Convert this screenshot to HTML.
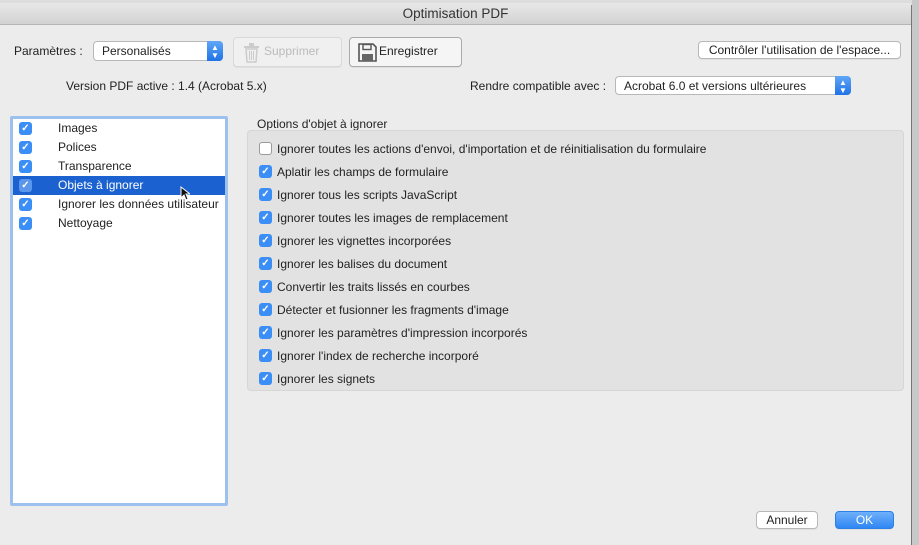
<!DOCTYPE html>
<html><head><meta charset="utf-8"><style>
*{box-sizing:border-box;margin:0;padding:0}
body{width:919px;height:545px;overflow:hidden;background:#c8c8c8;font-family:"Liberation Sans",sans-serif;font-size:12px;color:#222;position:relative}
.win{position:absolute;left:0;top:0;width:912px;height:545px;background:#ececec;border-right:1px solid #777}
.strip{position:absolute;left:0;top:0;width:912px;height:5px;background:#ddd}
.title{position:absolute;left:0;top:3px;width:911px;height:22px;background:linear-gradient(#e8e8e8,#d3d3d3);border-bottom:1px solid #b5b5b5;text-align:center;font-size:13.5px;line-height:22px;color:#333}
.a{position:absolute;white-space:nowrap}
.btn{position:absolute;background:#fff;border:1px solid #b8b8b8;border-radius:4px;text-align:center;font-size:12px;line-height:17px;box-shadow:0 1px 0 rgba(0,0,0,.05)}
.sel{position:absolute;background:#fff;border:1px solid #b8b8b8;border-radius:4px;font-size:12px;line-height:18px;padding-left:8px}
.sel .ar{position:absolute;right:-1px;top:-1px;width:16px;height:20px;background:linear-gradient(#5fa6f7,#1f73e6);border-radius:0 4px 4px 0;color:#fff;font-size:8px;line-height:8px;text-align:center;padding-top:3px}
.cb{position:absolute;width:13px;height:13px;border-radius:3px;background:#3a8ef6;color:#fff;font-size:10px;line-height:13px;text-align:center;font-weight:bold}
.cb.off{background:#fff;border:1px solid #9a9a9a}
.list{position:absolute;left:10px;top:116px;width:218px;height:390px;background:#fff;border:3px solid #9cc1ee;border-radius:2px}
.row{position:absolute;left:0;width:212px;height:19px;line-height:19px}
.row span{position:absolute;left:45px}
.row .cb{left:6px;top:3px}
.grp{position:absolute;left:247px;top:130px;width:657px;height:261px;background:#e2e2e2;border:1px solid #d6d6d6;border-radius:4px}
.opt{position:absolute;left:11px;height:16px;line-height:16px;white-space:nowrap}
.opt .cb{left:0;top:1px}
.opt span{position:absolute;left:18px}
</style></head><body>
<div class="win">
<div class="strip"></div>
<div class="title">Optimisation PDF</div>
<div class="a" style="left:14px;top:44px">Paramètres :</div>
<div class="sel" style="left:93px;top:41px;width:130px;height:20px">Personalisés<div class="ar">▲<br>▼</div></div>
<div class="btn" style="left:233px;top:37px;width:109px;height:30px;border-color:#d8d8d8;background:#f0f0f0;color:#bbb;line-height:26px;text-align:left;padding-left:30px">Supprimer
<svg style="position:absolute;left:9px;top:5px" width="17" height="20" viewBox="0 0 17 20"><rect x="1" y="3" width="15" height="2" fill="#ccc"/><rect x="6" y="0" width="5" height="3" fill="#ccc"/><path d="M3 6h11l-1 13H4z" fill="none" stroke="#ccc" stroke-width="1.5"/><path d="M6.5 8v9M8.5 8v9M10.5 8v9" stroke="#ccc"/></svg></div>
<div class="btn" style="left:349px;top:37px;width:113px;height:30px;line-height:26px;text-align:left;padding-left:29px;background:#f5f5f5;border-color:#aaa">Enregistrer
<svg style="position:absolute;left:8px;top:5px" width="19" height="19" viewBox="0 0 19 19"><path d="M1 1h14l3 3v14H1z" fill="none" stroke="#555" stroke-width="1.6"/><rect x="5" y="1.5" width="8" height="5" fill="none" stroke="#555" stroke-width="1.4"/><rect x="4" y="11" width="11" height="7" fill="#666"/></svg></div>
<div class="btn" style="left:698px;top:41px;width:203px;height:18px;line-height:16px">Contrôler l'utilisation de l'espace...</div>
<div class="a" style="left:66px;top:79px">Version PDF active : 1.4 (Acrobat 5.x)</div>
<div class="a" style="left:470px;top:79px">Rendre compatible avec :</div>
<div class="sel" style="left:615px;top:76px;width:236px;height:19px">Acrobat 6.0 et versions ultérieures<div class="ar" style="height:19px">▲<br>▼</div></div>
<div class="list">
<div class="row" style="top:0px"><div class="cb">✓</div><span>Images</span></div>
<div class="row" style="top:19px"><div class="cb">✓</div><span>Polices</span></div>
<div class="row" style="top:38px"><div class="cb">✓</div><span>Transparence</span></div>
<div class="row" style="top:57px;background:#1b62d0;color:#fff"><div class="cb" style="background:#5a96ec">✓</div><span>Objets à ignorer</span></div>
<div class="row" style="top:76px"><div class="cb">✓</div><span>Ignorer les données utilisateur</span></div>
<div class="row" style="top:95px"><div class="cb">✓</div><span>Nettoyage</span></div>
</div>
<svg style="position:absolute;left:180px;top:186px" width="10" height="15" viewBox="0 0 10 15"><path d="M1 1v11l3-3 2 5 2-1-2-5h4z" fill="#111" stroke="#fff" stroke-width="1"/></svg>
<div class="a" style="left:257px;top:117px">Options d'objet à ignorer</div>
<div class="grp">
<div class="opt" style="top:10px"><div class="cb off"></div><span>Ignorer toutes les actions d'envoi, d'importation et de réinitialisation du formulaire</span></div>
<div class="opt" style="top:33px"><div class="cb">✓</div><span>Aplatir les champs de formulaire</span></div>
<div class="opt" style="top:56px"><div class="cb">✓</div><span>Ignorer tous les scripts JavaScript</span></div>
<div class="opt" style="top:79px"><div class="cb">✓</div><span>Ignorer toutes les images de remplacement</span></div>
<div class="opt" style="top:102px"><div class="cb">✓</div><span>Ignorer les vignettes incorporées</span></div>
<div class="opt" style="top:125px"><div class="cb">✓</div><span>Ignorer les balises du document</span></div>
<div class="opt" style="top:148px"><div class="cb">✓</div><span>Convertir les traits lissés en courbes</span></div>
<div class="opt" style="top:171px"><div class="cb">✓</div><span>Détecter et fusionner les fragments d'image</span></div>
<div class="opt" style="top:194px"><div class="cb">✓</div><span>Ignorer les paramètres d'impression incorporés</span></div>
<div class="opt" style="top:217px"><div class="cb">✓</div><span>Ignorer l'index de recherche incorporé</span></div>
<div class="opt" style="top:240px"><div class="cb">✓</div><span>Ignorer les signets</span></div>
</div>
<div class="btn" style="left:756px;top:511px;width:62px;height:18px;line-height:16px">Annuler</div>
<div class="btn" style="left:835px;top:511px;width:59px;height:18px;line-height:16px;background:linear-gradient(#6fb0fa,#2f86f3);border-color:#2d7fe8;color:#fff">OK</div>
</div>
</body></html>
